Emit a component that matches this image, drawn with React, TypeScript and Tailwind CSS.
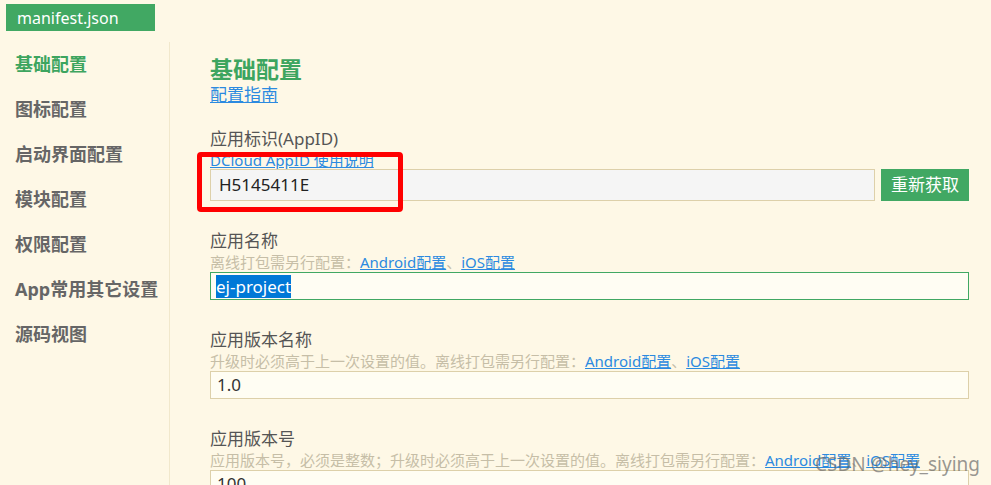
const font = { fontFamily: '"Noto Sans", "Noto Sans CJK SC", sans-serif' };

const navItems = ["基础配置", "图标配置", "启动界面配置", "模块配置", "权限配置", "App常用其它设置", "源码视图"];

function Hint({ text, links }: { text: string; links?: boolean }) {
  return (
    <div className="mt-px whitespace-nowrap text-[15px] leading-[18px] text-[#c6bea7]">
      {text}
      {links ? (
        <>
          <a className="text-[#2b8ae0] underline">Android配置</a>
          <span>、</span>
          <a className="text-[#2b8ae0] underline">iOS配置</a>
        </>
      ) : null}
    </div>
  );
}

function Field({
  label,
  hint,
  value,
  focused,
}: {
  label: string;
  hint: string;
  value: string;
  focused?: boolean;
}) {
  return (
    <div className="mt-[29px]">
      <div className="text-[17px] leading-[22px] text-[#555]">{label}</div>
      <Hint text={hint} links />
      <div
        className={
          focused
            ? "mt-px flex h-[28px] items-center border border-[#41a863] bg-[#fffdf3] px-[5px] text-[17px] text-[#333]"
            : "mt-px flex h-[28px] items-center border border-[#ddd0aa] bg-[#fffdf3] px-[6px] text-[17px] text-[#333]"
        }
      >
        {focused ? <span className="bg-[#0078d7] leading-[23px] text-white">{value}</span> : value}
      </div>
    </div>
  );
}

export default function App() {
  return (
    <div className="relative h-[485px] w-full overflow-hidden bg-[#fef8e6]" style={font}>
      <div className="pl-[6px] pt-[4px]">
        <div className="flex h-[27px] w-[149px] items-center bg-[#41a863] pl-[11px] text-[16px] text-white">
          manifest.json
        </div>
      </div>

      <div className="mt-[11px] flex h-[443px]">
        <nav className="w-[170px] shrink-0 border-r border-[#f1e8cc]">
          {navItems.map((item, i) => (
            <div
              key={item}
              className={
                i === 0
                  ? "flex h-[45px] items-center pl-[15px] text-[18px] font-bold text-[#3da55f]"
                  : "flex h-[45px] items-center pl-[15px] text-[18px] font-bold text-[#666]"
              }
            >
              {item}
            </div>
          ))}
        </nav>

        <main className="min-w-0 flex-1 pl-[40px] pr-[22px] pt-[12px]">
          <h1 className="text-[23px] font-bold leading-[30px] text-[#3da55f]">基础配置</h1>
          <a className="block text-[17px] leading-[22px] text-[#2b8ae0] underline">配置指南</a>

          <div className="mt-[22px]">
            <div className="text-[17px] leading-[22px] text-[#555]">应用标识(AppID)</div>
            <a className="mt-px block text-[15px] leading-[18px] text-[#2b8ae0] underline">DCloud AppID 使用说明</a>
            <div className="flex gap-[6px]">
              <div className="flex h-[32px] flex-1 items-center border border-[#ddd0aa] bg-[#f5f5f5] px-[8px] text-[17px] text-[#222]">
                H5145411E
              </div>
              <button className="h-[32px] w-[88px] bg-[#41a863] text-[17px] text-white">重新获取</button>
            </div>
          </div>

          <div className="mt-[2px]">
            <Field label="应用名称" hint="离线打包需另行配置：" value="ej-project" focused />
          </div>
          <Field label="应用版本名称" hint="升级时必须高于上一次设置的值。离线打包需另行配置：" value="1.0" />
          <Field
            label="应用版本号"
            hint="应用版本号，必须是整数；升级时必须高于上一次设置的值。离线打包需另行配置："
            value="100"
          />
        </main>
      </div>

      {/* annotation box over the AppID input */}
      <div className="absolute left-[197px] top-[152px] h-[60px] w-[206px] rounded-[4px] border-[5px] border-[#ff0000]" />

      <div className="pointer-events-none absolute left-[815px] top-[452px] whitespace-nowrap text-[19px] leading-[24px] text-[#6a6a6a]/70">
        CSDN @hey_siying
      </div>
    </div>
  );
}
